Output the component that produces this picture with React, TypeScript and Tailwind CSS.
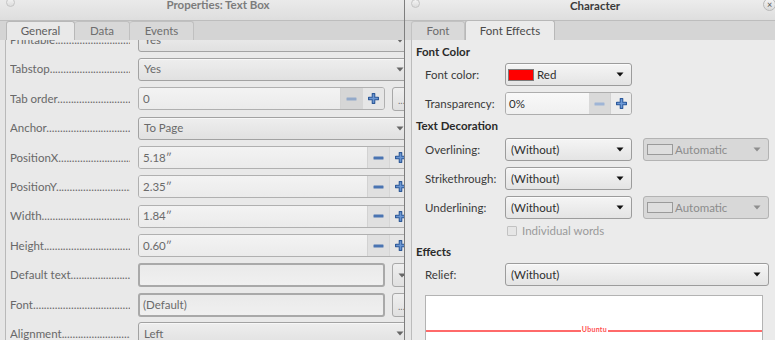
import React from "react";

const Arrow = ({ c = "#222" }: { c?: string }) => (
  <svg width="8" height="5" viewBox="0 0 8 5"><path d="M0.5 0.5h7L4 4.5z" fill={c} /></svg>
);

const Minus = ({ c }: { c: string }) => (
  <svg width="11" height="4" viewBox="0 0 11 4"><rect x="0.5" y="0.5" width="10" height="3" rx="0.5" fill={c} /></svg>
);

const Plus = ({ light, dark }: { light: string; dark: string }) => (
  <svg width="11" height="11" viewBox="0 0 11 11">
    <path d="M5.5 1v9M1 5.5h9" stroke={dark} strokeWidth="3.6" strokeLinecap="round" />
    <path d="M5.5 1.8v7.4M1.8 5.5h7.4" stroke={light} strokeWidth="1.6" strokeLinecap="round" />
  </svg>
);

const LeftLabel = ({ t }: { t: string }) => (
  <div className="w-[132px] shrink-0 pl-[4px]">
    <div className="w-[120px] overflow-hidden whitespace-nowrap text-[#686868]">
      {t}
      ..................................................................
    </div>
  </div>
);

const LListBox = ({ v }: { v: string }) => (
  <div className="w-[272px] h-[23px] border border-[#a2a2a2] rounded-[3px] bg-gradient-to-b from-[#eeeeee] to-[#e1e1e1] flex items-center justify-between pl-[5px] pr-[5px] text-[#6a6a6a] shadow-[inset_0_1px_0_#f7f7f7]">
    <span>{v}</span>
    <Arrow c="#666" />
  </div>
);

const LSpin = ({ v, w, dis }: { v: string; w: string; dis?: boolean }) => (
  <div className={`${w} h-[23px] border border-[#b0b0b0] rounded-[3px] flex overflow-hidden`}>
    <div className="flex-1 bg-gradient-to-b from-[#f3f3f3] to-[#ebebeb] flex items-center pl-[4px] text-[#6a6a6a]">{v}</div>
    <div className={`w-[22px] flex items-center justify-center border-l border-[#d2d2d2] ${dis ? "bg-[#d6d6d6]" : "bg-[#e0e0e0]"}`}>
      <Minus c={dis ? "#93a9c9" : "#4a74b2"} />
    </div>
    <div className="w-[22px] flex items-center justify-center bg-[#e6e6e6] border-l border-[#d6d6d6]">
      <Plus light="#6b96d2" dark="#2f5a98" />
    </div>
  </div>
);

const LField = ({ v }: { v: string }) => (
  <div className="w-[247px] h-[24px] border-2 border-[#a9a9a9] rounded-[3px] bg-gradient-to-b from-[#eaeaea] to-[#f0f0f0] flex items-center pl-[3px] text-[#6a6a6a]">
    {v}
  </div>
);

const LBtn = ({ kind }: { kind: "dots" | "arrow" }) => (
  <div className="ml-[7px] w-[26px] h-[24px] shrink-0 border border-[#a8a8a8] rounded-[3px] bg-gradient-to-b from-[#efefef] to-[#e0e0e0] flex items-center justify-start pl-[5px] text-[#777] text-[10px]">
    {kind === "dots" ? <span className="pt-[3px]">...</span> : <Arrow c="#666" />}
  </div>
);

const Row = ({ children }: { children: React.ReactNode }) => (
  <div className="flex items-center h-[23px] shrink-0">{children}</div>
);

const RLabel = ({ t }: { t: string }) => (
  <div className="w-[93px] shrink-0 pl-[13px] text-[#3a3a3a] whitespace-nowrap">{t}</div>
);

const RListBox = ({ v, w, swatch }: { v: string; w: string; swatch?: boolean }) => (
  <div className={`${w} h-[23px] border border-[#9c9c9c] rounded-[3px] bg-gradient-to-b from-[#f5f5f5] to-[#e4e4e4] flex items-center justify-between pl-[2px] pr-[7px] text-[#2e2e2e] shadow-[inset_0_1px_0_#fbfbfb]`}>
    <div className="flex items-center">
      {swatch ? (
        <span className="w-[26px] h-[12px] bg-[#ff0000] border border-[#7a7a7a] mr-[3px]" />
      ) : (
        <span className="w-[3px]" />
      )}
      <span>{v}</span>
    </div>
    <Arrow c="#111" />
  </div>
);

const AutoBox = () => (
  <div className="ml-[11px] w-[126px] h-[23px] border border-[#b3b3b3] rounded-[3px] bg-[#d8d8d8] flex items-center justify-between pl-[3px] pr-[7px] text-[#8c8c8c]">
    <div className="flex items-center">
      <span className="w-[26px] h-[11px] border border-[#9a9a9a] bg-[#dedede] mr-[2px]" />
      <span>Automatic</span>
    </div>
    <Arrow c="#8e8e8e" />
  </div>
);

const Heading = ({ t, mt }: { t: string; mt: string }) => (
  <div className={`${mt} pl-[4px] h-[16px] leading-[16px] font-bold text-[#2a2a2a]`}>{t}</div>
);

export default function App() {
  return (
    <div className="w-[775px] h-[340px] flex overflow-hidden font-['Lato',sans-serif] text-[11.5px] leading-[14px] bg-[#e6e6e6]">
      {/* Properties window */}
      <div className="w-[404px] shrink-0 h-full overflow-hidden">
        <div className="w-[436px] h-full flex flex-col bg-[#e6e6e6]">
          <div className="h-[20px] shrink-0 relative bg-gradient-to-b from-[#eaeaea] to-[#dedede]">
            <div className="absolute left-[6px] -top-[2px] w-[9px] h-[9px] rounded-full border border-[#c4c4c4] bg-gradient-to-b from-[#f4f4f4] to-[#dcdcdc]" />
            <div className="text-center font-bold text-[#7c7c7c] leading-[12px] -mt-[1px]">Properties: Text Box</div>
          </div>
          <div className="h-[20px] shrink-0 bg-[#d4d4d4] border-t border-[#bdbdbd] flex items-end pl-[6px]">
            <div className="w-[69px] h-[19px] bg-[#e9e9e9] border border-b-0 border-[#b8b8b8] rounded-t-[3px] flex items-center justify-center text-[#5e5e5e]">General</div>
            <div className="w-[55px] h-[19px] bg-[#d8d8d8] border-t border-r border-[#c0c0c0] rounded-t-[3px] flex items-center justify-center text-[#6e6e6e]">Data</div>
            <div className="w-[64px] h-[19px] bg-[#d8d8d8] border-t border-r border-[#c0c0c0] rounded-t-[3px] flex items-center justify-center text-[#6e6e6e]">Events</div>
          </div>
          <div className="flex-1 ml-[5px] border-l border-[#b9b9b9] bg-[#e9e9e9] overflow-hidden">
            <div className="-mt-[11.5px] flex flex-col gap-[6.4px]">
              <Row><LeftLabel t="Printable" /><LListBox v="Yes" /></Row>
              <Row><LeftLabel t="Tabstop" /><LListBox v="Yes" /></Row>
              <Row><LeftLabel t="Tab order" /><LSpin v="0" w="w-[247px]" dis /><LBtn kind="dots" /></Row>
              <Row><LeftLabel t="Anchor" /><LListBox v="To Page" /></Row>
              <Row><LeftLabel t="PositionX" /><LSpin v="5.18″" w="w-[274px]" /></Row>
              <Row><LeftLabel t="PositionY" /><LSpin v="2.35″" w="w-[274px]" /></Row>
              <Row><LeftLabel t="Width" /><LSpin v="1.84″" w="w-[274px]" /></Row>
              <Row><LeftLabel t="Height" /><LSpin v="0.60″" w="w-[274px]" /></Row>
              <Row><LeftLabel t="Default text" /><LField v="" /><LBtn kind="arrow" /></Row>
              <Row><LeftLabel t="Font" /><LField v="(Default)" /><LBtn kind="dots" /></Row>
              <Row><LeftLabel t="Alignment" /><LListBox v="Left" /></Row>
            </div>
          </div>
        </div>
      </div>

      {/* Character window */}
      <div className="flex-1 h-full overflow-hidden border-l border-[#7e7e7e]">
        <div className="w-[380px] h-full flex flex-col bg-[#e7e7e7]">
          <div className="h-[20px] shrink-0 relative bg-gradient-to-b from-[#ececec] to-[#dedede]">
            <div className="absolute left-[6px] -top-[1px] w-[9px] h-[9px] rounded-full border border-[#c4c4c4] bg-gradient-to-b from-[#f4f4f4] to-[#dcdcdc]" />
            <div className="text-center font-bold text-[#3a3a3a] leading-[12px] pt-[0px]">Character</div>
            <div className="absolute right-[9px] -top-[2px] w-[13px] h-[13px] rounded-full border border-[#b8b8b8] bg-gradient-to-b from-[#f4f4f4] to-[#dadada] flex items-center justify-center text-[9px] leading-[9px] text-[#555]">×</div>
          </div>
          <div className="h-[20px] shrink-0 bg-[#d5d5d5] border-t border-[#bdbdbd] flex items-end pl-[6px]">
            <div className="w-[54px] h-[19px] bg-[#d9d9d9] border-t border-l border-r border-[#c2c2c2] rounded-t-[3px] flex items-center justify-center text-[#6c6c6c]">Font</div>
            <div className="w-[90px] h-[20px] bg-[#ebebeb] border border-b-0 border-[#b8b8b8] rounded-t-[3px] flex items-center justify-center text-[#4a4a4a]">Font Effects</div>
          </div>
          <div className="flex-1 ml-[6px] border-l border-[#bcbcbc] bg-[#ebebeb] overflow-hidden flex flex-col">
            <Heading t="Font Color" mt="mt-[4px]" />
            <div className="mt-[3px] flex items-center h-[23px]">
              <RLabel t="Font color:" />
              <RListBox v="Red" w="w-[127px]" swatch />
            </div>
            <div className="mt-[6px] flex items-center h-[23px]">
              <RLabel t="Transparency:" />
              <div className="w-[127px] h-[23px] border border-[#adadad] rounded-[3px] flex overflow-hidden">
                <div className="flex-1 bg-gradient-to-b from-[#f8f8f8] to-[#f0f0f0] flex items-center pl-[3px] text-[#2e2e2e]">0%</div>
                <div className="w-[21px] bg-[#d9d9d9] flex items-center justify-center">
                  <Minus c="#9fb5d6" />
                </div>
                <div className="w-[21px] bg-[#ededed] border-l border-[#d2d2d2] flex items-center justify-center">
                  <Plus light="#6e9ad6" dark="#2d5a9c" />
                </div>
              </div>
            </div>
            <Heading t="Text Decoration" mt="mt-[3px]" />
            <div className="mt-[4px] flex items-center h-[23px]">
              <RLabel t="Overlining:" />
              <RListBox v="(Without)" w="w-[127px]" />
              <AutoBox />
            </div>
            <div className="mt-[6px] flex items-center h-[23px]">
              <RLabel t="Strikethrough:" />
              <RListBox v="(Without)" w="w-[127px]" />
            </div>
            <div className="mt-[6px] flex items-center h-[23px]">
              <RLabel t="Underlining:" />
              <RListBox v="(Without)" w="w-[127px]" />
              <AutoBox />
            </div>
            <div className="mt-[4px] h-[16px] flex items-center pl-[95px]">
              <span className="w-[10px] h-[10px] border border-[#c2c2c2] bg-[#e6e6e6] rounded-[1px]" />
              <span className="ml-[5px] text-[#9a9a9a]">Individual words</span>
            </div>
            <Heading t="Effects" mt="mt-[5px]" />
            <div className="mt-[3px] flex items-center h-[23px]">
              <RLabel t="Relief:" />
              <RListBox v="(Without)" w="w-[264px]" />
            </div>
            <div className="mt-[9px] ml-[13px] w-[338px] flex-1 bg-white border border-b-0 border-[#b3b3b3] relative">
              <div className="absolute left-0 right-0 top-[29px] flex items-end">
                <div className="flex-1 h-[2px] bg-[#ff6a6a] mb-[1px]" />
                <span className="text-[7px] leading-[8px] font-bold text-[#ff5050] px-[1px] tracking-[0.3px]">Ubuntu</span>
                <div className="w-[154px] h-[2px] bg-[#ff6a6a] mb-[1px]" />
              </div>
            </div>
          </div>
        </div>
      </div>
    </div>
  );
}
